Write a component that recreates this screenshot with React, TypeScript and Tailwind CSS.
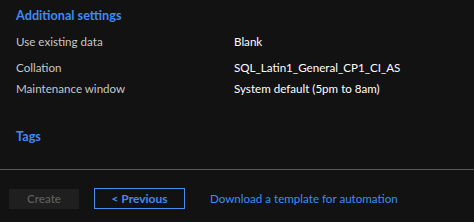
import React from 'react';

const rows = [
  { label: 'Use existing data', value: 'Blank', cls: 'h-[26px]' },
  { label: 'Collation', value: 'SQL_Latin1_General_CP1_CI_AS', cls: 'h-[26px]' },
  { label: 'Maintenance window', value: 'System default (5pm to 8am)', cls: 'h-[16px]' },
];

export default function App() {
  return (
    <div
      className="w-[474px] h-[222px] bg-[#121212] overflow-hidden flex flex-col"
      style={{ fontFamily: 'Lato, "Noto Sans", sans-serif' }}
    >
      <div className="h-[169px] px-4 pt-[5px]">
        {/* Additional settings */}
        <h2 className="text-[12.7px] font-bold leading-[20px] text-[#3e8bf2]">Additional settings</h2>
        <div className="mt-[4px]">
          {rows.map((row) => (
            <div key={row.label} className={`flex items-center text-[11.6px] ${row.cls}`}>
              <span className="w-[218px] text-[#c6c6c6]">{row.label}</span>
              <span className="text-white">{row.value}</span>
            </div>
          ))}
        </div>
        {/* Tags */}
        <h2 className="mt-[29px] text-[12.7px] font-bold leading-[20px] text-[#3e8bf2]">Tags</h2>
      </div>

      <div className="h-px bg-[#5a5a5a]" />

      <div className="flex items-center pl-[9px] pt-[18px] text-[11.6px]">
        <button className="w-[70px] h-[20px] bg-[#1f1f1f] text-[#5c5c5c] font-semibold">Create</button>
        <button className="ml-[15px] w-[91px] h-[21px] border border-[#4a8df0] text-[12px] text-[#3e8bf2] font-bold">
          &lt; Previous
        </button>
        <a className="ml-[25px] text-[#3e8bf2]">Download a template for automation</a>
      </div>
    </div>
  );
}
